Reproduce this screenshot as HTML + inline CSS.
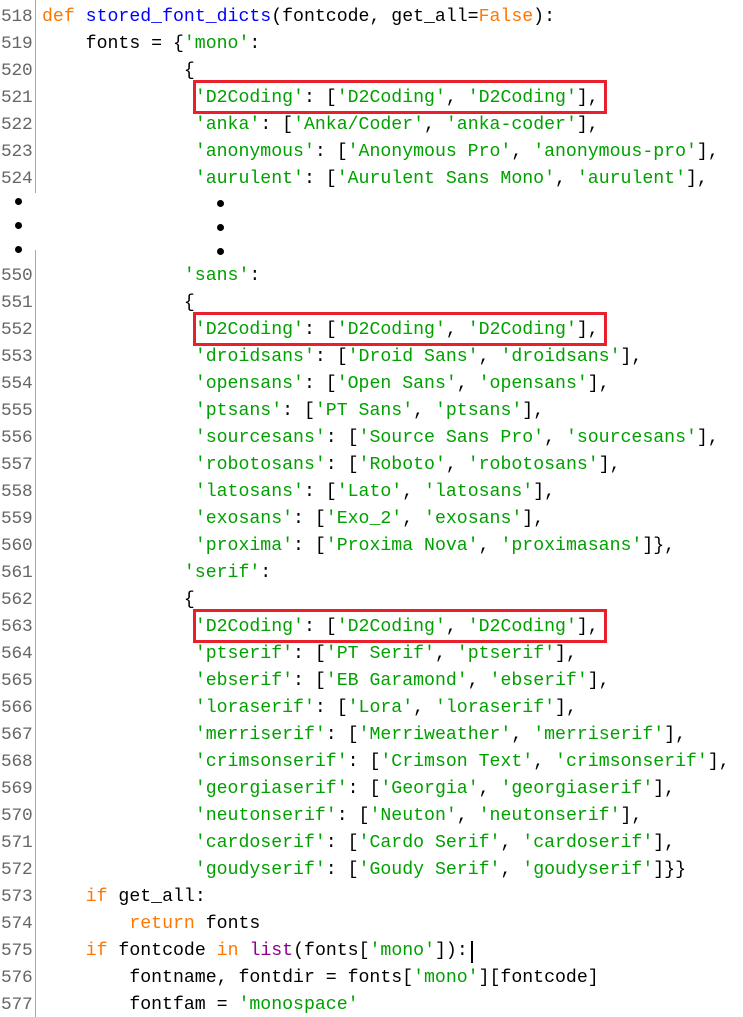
<!DOCTYPE html>
<html><head><meta charset="utf-8"><style>
html,body{margin:0;padding:0;background:#fff;width:743px;height:1017px;overflow:hidden;position:relative}
.l{position:absolute;left:0;height:27px;line-height:27px;white-space:pre;font-family:"Liberation Mono",monospace;}
.n{position:absolute;left:1px;width:34px;font-size:17.8px;color:#666;letter-spacing:-0.2px;}
.c{position:absolute;left:42px;font-size:18.2px;color:#000}
.k{color:#ff7700}.f{color:#0000ff}.s{color:#00a000}.p{color:#900090}
.bar{position:absolute;left:35px;width:1px;background:#a8a8a8}
.box{position:absolute;left:193px;width:408px;height:28px;border:3px solid #e8202a;box-sizing:content-box}
.dot{position:absolute;width:7px;height:7px;border-radius:50%;background:#000}
</style></head><body>
<div class="bar" style="top:0;height:193px"></div>
<div class="bar" style="top:250px;height:767px"></div>

<div class="l" style="top:4px"><span class="n">518</span><span class="c"><span class="k">def</span> <span class="f">stored_font_dicts</span>(fontcode, get_all=<span class="k">False</span>):</span></div>
<div class="l" style="top:31px"><span class="n">519</span><span class="c">    fonts = {<span class="s">'mono'</span>:</span></div>
<div class="l" style="top:58px"><span class="n">520</span><span class="c">             {</span></div>
<div class="l" style="top:85px"><span class="n">521</span><span class="c">              <span class="s">'D2Coding'</span>: [<span class="s">'D2Coding'</span>, <span class="s">'D2Coding'</span>],</span></div>
<div class="l" style="top:112px"><span class="n">522</span><span class="c">              <span class="s">'anka'</span>: [<span class="s">'Anka/Coder'</span>, <span class="s">'anka-coder'</span>],</span></div>
<div class="l" style="top:139px"><span class="n">523</span><span class="c">              <span class="s">'anonymous'</span>: [<span class="s">'Anonymous Pro'</span>, <span class="s">'anonymous-pro'</span>],</span></div>
<div class="l" style="top:166px"><span class="n">524</span><span class="c">              <span class="s">'aurulent'</span>: [<span class="s">'Aurulent Sans Mono'</span>, <span class="s">'aurulent'</span>],</span></div>

<div class="dot" style="left:15px;top:198px"></div>
<div class="dot" style="left:15px;top:222px"></div>
<div class="dot" style="left:15px;top:246px"></div>
<div class="dot" style="left:217px;top:200px"></div>
<div class="dot" style="left:217px;top:224px"></div>
<div class="dot" style="left:217px;top:248px"></div>

<div class="l" style="top:263px"><span class="n">550</span><span class="c">             <span class="s">'sans'</span>:</span></div>
<div class="l" style="top:290px"><span class="n">551</span><span class="c">             {</span></div>
<div class="l" style="top:317px"><span class="n">552</span><span class="c">              <span class="s">'D2Coding'</span>: [<span class="s">'D2Coding'</span>, <span class="s">'D2Coding'</span>],</span></div>
<div class="l" style="top:344px"><span class="n">553</span><span class="c">              <span class="s">'droidsans'</span>: [<span class="s">'Droid Sans'</span>, <span class="s">'droidsans'</span>],</span></div>
<div class="l" style="top:371px"><span class="n">554</span><span class="c">              <span class="s">'opensans'</span>: [<span class="s">'Open Sans'</span>, <span class="s">'opensans'</span>],</span></div>
<div class="l" style="top:398px"><span class="n">555</span><span class="c">              <span class="s">'ptsans'</span>: [<span class="s">'PT Sans'</span>, <span class="s">'ptsans'</span>],</span></div>
<div class="l" style="top:425px"><span class="n">556</span><span class="c">              <span class="s">'sourcesans'</span>: [<span class="s">'Source Sans Pro'</span>, <span class="s">'sourcesans'</span>],</span></div>
<div class="l" style="top:452px"><span class="n">557</span><span class="c">              <span class="s">'robotosans'</span>: [<span class="s">'Roboto'</span>, <span class="s">'robotosans'</span>],</span></div>
<div class="l" style="top:479px"><span class="n">558</span><span class="c">              <span class="s">'latosans'</span>: [<span class="s">'Lato'</span>, <span class="s">'latosans'</span>],</span></div>
<div class="l" style="top:506px"><span class="n">559</span><span class="c">              <span class="s">'exosans'</span>: [<span class="s">'Exo_2'</span>, <span class="s">'exosans'</span>],</span></div>
<div class="l" style="top:533px"><span class="n">560</span><span class="c">              <span class="s">'proxima'</span>: [<span class="s">'Proxima Nova'</span>, <span class="s">'proximasans'</span>]},</span></div>
<div class="l" style="top:560px"><span class="n">561</span><span class="c">             <span class="s">'serif'</span>:</span></div>
<div class="l" style="top:587px"><span class="n">562</span><span class="c">             {</span></div>
<div class="l" style="top:614px"><span class="n">563</span><span class="c">              <span class="s">'D2Coding'</span>: [<span class="s">'D2Coding'</span>, <span class="s">'D2Coding'</span>],</span></div>
<div class="l" style="top:641px"><span class="n">564</span><span class="c">              <span class="s">'ptserif'</span>: [<span class="s">'PT Serif'</span>, <span class="s">'ptserif'</span>],</span></div>
<div class="l" style="top:668px"><span class="n">565</span><span class="c">              <span class="s">'ebserif'</span>: [<span class="s">'EB Garamond'</span>, <span class="s">'ebserif'</span>],</span></div>
<div class="l" style="top:695px"><span class="n">566</span><span class="c">              <span class="s">'loraserif'</span>: [<span class="s">'Lora'</span>, <span class="s">'loraserif'</span>],</span></div>
<div class="l" style="top:722px"><span class="n">567</span><span class="c">              <span class="s">'merriserif'</span>: [<span class="s">'Merriweather'</span>, <span class="s">'merriserif'</span>],</span></div>
<div class="l" style="top:749px"><span class="n">568</span><span class="c">              <span class="s">'crimsonserif'</span>: [<span class="s">'Crimson Text'</span>, <span class="s">'crimsonserif'</span>],</span></div>
<div class="l" style="top:776px"><span class="n">569</span><span class="c">              <span class="s">'georgiaserif'</span>: [<span class="s">'Georgia'</span>, <span class="s">'georgiaserif'</span>],</span></div>
<div class="l" style="top:803px"><span class="n">570</span><span class="c">              <span class="s">'neutonserif'</span>: [<span class="s">'Neuton'</span>, <span class="s">'neutonserif'</span>],</span></div>
<div class="l" style="top:830px"><span class="n">571</span><span class="c">              <span class="s">'cardoserif'</span>: [<span class="s">'Cardo Serif'</span>, <span class="s">'cardoserif'</span>],</span></div>
<div class="l" style="top:857px"><span class="n">572</span><span class="c">              <span class="s">'goudyserif'</span>: [<span class="s">'Goudy Serif'</span>, <span class="s">'goudyserif'</span>]}}</span></div>
<div class="l" style="top:884px"><span class="n">573</span><span class="c">    <span class="k">if</span> get_all:</span></div>
<div class="l" style="top:911px"><span class="n">574</span><span class="c">        <span class="k">return</span> fonts</span></div>
<div class="l" style="top:938px"><span class="n">575</span><span class="c">    <span class="k">if</span> fontcode <span class="k">in</span> <span class="p">list</span>(fonts[<span class="s">'mono'</span>]):</span></div>
<div class="l" style="top:965px"><span class="n">576</span><span class="c">        fontname, fontdir = fonts[<span class="s">'mono'</span>][fontcode]</span></div>
<div class="l" style="top:992px"><span class="n">577</span><span class="c">        fontfam = <span class="s">'monospace'</span></span></div>

<div style="position:absolute;left:471px;top:941px;width:2px;height:22px;background:#000"></div>

<div class="box" style="top:80px"></div>
<div class="box" style="top:312px"></div>
<div class="box" style="top:609px"></div>
</body></html>
